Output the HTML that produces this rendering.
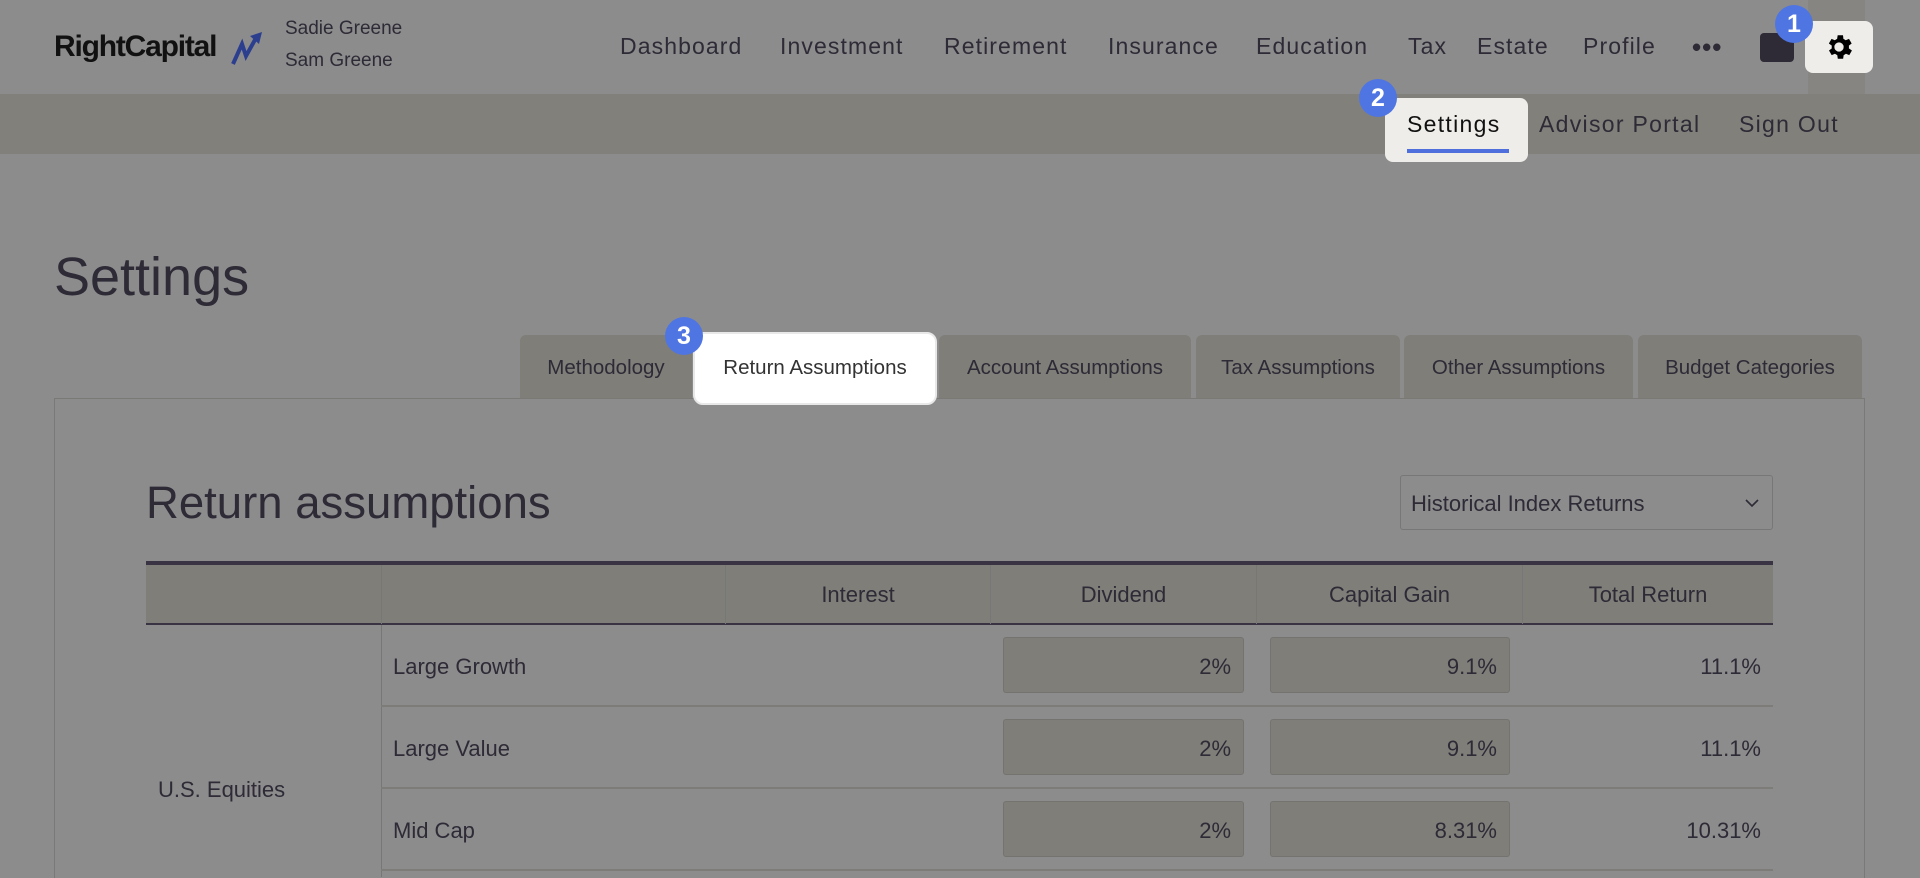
<!DOCTYPE html>
<html><head><meta charset="utf-8"><style>
*{margin:0;padding:0;box-sizing:border-box}
body{width:1920px;height:877px;overflow:hidden;background:#8c8c8c;font-family:"Liberation Sans",sans-serif;color:#2e2a36;position:relative}
.a{position:absolute;white-space:nowrap}
.top{left:0;top:0;width:1920px;height:94px;background:#8c8c8c}
.sub{left:0;top:94px;width:1920px;height:60px;background:#81807b}
.nav{top:33px;font-size:23px;letter-spacing:1.1px;color:#2e2a36}
.badge{width:38px;height:38px;border-radius:50%;background:#4f75e2;color:#fff;font-weight:bold;font-size:25px;text-align:center;line-height:38px}
.tab{top:335px;height:63px;background:#7f7e79;border-radius:6px 6px 0 0;font-size:20.5px;text-align:center;line-height:66px;color:#2e2a36}
.col{position:absolute;top:565px;height:59px;border-left:1px solid #777;font-size:22px;text-align:center;line-height:59px}
.inp{position:absolute;height:56px;background:#7f7e79;border:1px solid #747370;border-radius:3px;font-size:22px;text-align:right;padding-right:12px;line-height:57px}
.rl{position:absolute;font-size:22px}
.hr{position:absolute;left:381px;width:1392px;height:2px;background:#7d7c78}
</style></head><body>
<div class="a top"></div>
<div class="a" style="left:1808px;top:0;width:57px;height:94px;background:#868581"></div>
<div class="a sub"></div>
<div class="a" style="left:54px;top:30px;font-size:30px;font-weight:bold;letter-spacing:-1.2px;color:#111">RightCapital</div>
<svg class="a" style="left:230px;top:30px" width="42" height="36" viewBox="0 0 42 36"><path d="M3 34 L12 14 L16 26 L26 8" fill="none" stroke="#2c3f8f" stroke-width="4"/><path d="M20 6 L32 2 L29 14 Z" fill="#2c3f8f"/></svg>
<div class="a" style="left:285px;top:18px;font-size:19px">Sadie Greene</div>
<div class="a" style="left:285px;top:50px;font-size:19px">Sam Greene</div>
<div class="a nav" style="left:620px">Dashboard</div>
<div class="a nav" style="left:780px">Investment</div>
<div class="a nav" style="left:944px">Retirement</div>
<div class="a nav" style="left:1108px">Insurance</div>
<div class="a nav" style="left:1256px">Education</div>
<div class="a nav" style="left:1408px">Tax</div>
<div class="a nav" style="left:1477px">Estate</div>
<div class="a nav" style="left:1583px">Profile</div>
<div class="a" style="left:1692px;top:32px;font-size:26px;letter-spacing:1px;font-weight:bold">•••</div>
<div class="a" style="left:1760px;top:33px;width:34px;height:29px;background:#2e2a36;border-radius:4px"></div>
<div class="a" style="left:1805px;top:21px;width:68px;height:52px;background:#eeede9;border-radius:8px"></div>
<svg class="a" style="left:1823px;top:31px" width="32" height="32" viewBox="0 0 24 24"><path fill="#000" d="M19.4 13a7.5 7.5 0 0 0 0-2l2.1-1.6-2-3.5-2.5 1a7 7 0 0 0-1.7-1L15 3.2h-4l-.4 2.7a7 7 0 0 0-1.700 1l-2.5-1-2 3.5L6.6 11a7.5 7.5 0 0 0 0 2l-2.1 1.6 2 3.5 2.5-1a7 7 0 0 0 1.7 1l.4 2.7h4l.4-2.7a7 7 0 0 0 1.7-1l2.5 1 2-3.5zM12 15.5a3.5 3.5 0 1 1 0-7 3.5 3.5 0 0 1 0 7z"/></svg>
<div class="a badge" style="left:1775px;top:5px">1</div>
<div class="a" style="left:1385px;top:98px;width:143px;height:64px;background:#eeede9;border-radius:8px"></div>
<div class="a" style="left:1407px;top:111px;font-size:23px;letter-spacing:1.3px;color:#111">Settings</div>
<div class="a" style="left:1407px;top:149px;width:102px;height:4px;background:#4f6fdc"></div>
<div class="a" style="left:1539px;top:111px;font-size:23px;letter-spacing:1.3px">Advisor Portal</div>
<div class="a" style="left:1739px;top:111px;font-size:23px;letter-spacing:1.3px">Sign Out</div>
<div class="a badge" style="left:1359px;top:79px">2</div>
<div class="a" style="left:54px;top:246px;font-size:54px">Settings</div>
<div class="a" style="left:54px;top:398px;width:1811px;height:480px;border:1px solid #7a7976;border-bottom:none"></div>
<div class="a tab" style="left:520px;width:172px">Methodology</div>
<div class="a tab" style="left:939px;width:252px">Account Assumptions</div>
<div class="a tab" style="left:1196px;width:204px">Tax Assumptions</div>
<div class="a tab" style="left:1404px;width:229px">Other Assumptions</div>
<div class="a tab" style="left:1638px;width:224px">Budget Categories</div>
<div class="a" style="left:693px;top:332px;width:244px;height:73px;background:#fff;border-radius:10px;border:2px solid #e8e8e8;font-size:20.5px;text-align:center;line-height:68px;color:#333">Return Assumptions</div>
<div class="a badge" style="left:665px;top:317px">3</div>
<div class="a" style="left:146px;top:477px;font-size:45.5px">Return assumptions</div>
<div class="a" style="left:1400px;top:475px;width:373px;height:55px;border:1px solid #777;border-radius:3px;font-size:22px;line-height:55px;padding-left:10px">Historical Index Returns</div>
<svg class="a" style="left:1745px;top:498px" width="14" height="10"><path d="M1 2 L7 8 L13 2" fill="none" stroke="#2e2a36" stroke-width="1.6"/></svg>
<div class="a" style="left:146px;top:561px;width:1627px;height:4px;background:#3a3344"></div>
<div class="a" style="left:146px;top:565px;width:1627px;height:59px;background:#7f7e79"></div>
<div class="a" style="left:146px;top:623px;width:1627px;height:2px;background:#3a3344"></div>
<div class="col" style="left:381px;width:344px"></div>
<div class="col" style="left:725px;width:265px">Interest</div>
<div class="col" style="left:990px;width:266px">Dividend</div>
<div class="col" style="left:1256px;width:266px">Capital Gain</div>
<div class="col" style="left:1522px;width:251px">Total Return</div>
<div class="a" style="left:381px;top:625px;width:1px;height:252px;background:#777"></div>
<div class="rl" style="left:393px;top:654px">Large Growth</div>
<div class="rl" style="left:393px;top:736px">Large Value</div>
<div class="rl" style="left:393px;top:818px">Mid Cap</div>
<div class="rl" style="left:158px;top:777px">U.S. Equities</div>
<div class="hr" style="top:705px"></div><div class="hr" style="top:787px"></div><div class="hr" style="top:869px"></div>
<div class="inp" style="left:1003px;top:637px;width:241px">2%</div>
<div class="inp" style="left:1270px;top:637px;width:240px">9.1%</div>
<div class="rl" style="left:1600px;top:654px;width:161px;text-align:right">11.1%</div>
<div class="inp" style="left:1003px;top:719px;width:241px">2%</div>
<div class="inp" style="left:1270px;top:719px;width:240px">9.1%</div>
<div class="rl" style="left:1600px;top:736px;width:161px;text-align:right">11.1%</div>
<div class="inp" style="left:1003px;top:801px;width:241px">2%</div>
<div class="inp" style="left:1270px;top:801px;width:240px">8.31%</div>
<div class="rl" style="left:1600px;top:818px;width:161px;text-align:right">10.31%</div>
</body></html>
